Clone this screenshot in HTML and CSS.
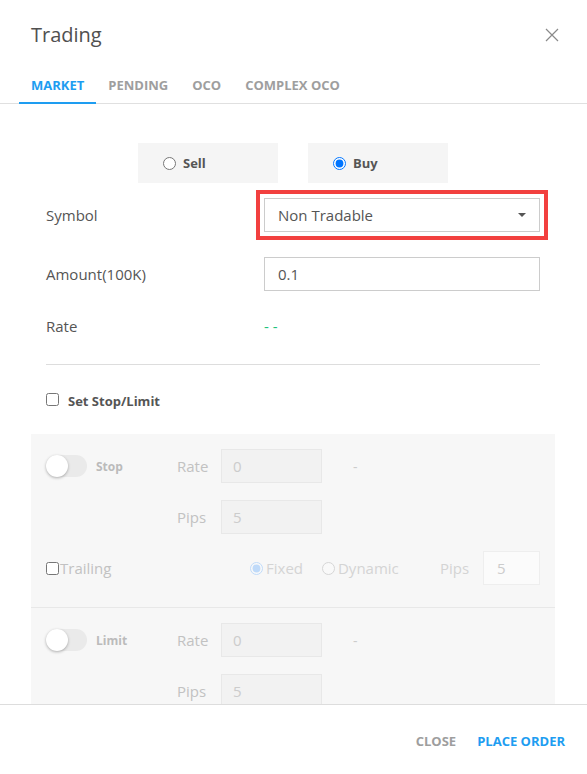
FILE: index.html
```html
<!DOCTYPE html>
<html lang="en">
<head>
    <meta charset="UTF-8">
    <meta name="viewport" content="width=device-width, initial-scale=1.0">
    <title>Trading</title>
    <link rel="stylesheet" href="styles.css">
</head>
<body>
    <div class="dialog">
        <header class="dialog-header">
            <h1 class="dialog-title">Trading</h1>
            <button class="close-btn" aria-label="Close">
                <svg width="14" height="14" viewBox="0 0 14 14">
                    <path d="M1 1L13 13M13 1L1 13" stroke="#8a8a8a" stroke-width="1.2" fill="none"/>
                </svg>
            </button>
        </header>

        <nav class="tabs">
            <span class="tab active">Market</span>
            <span class="tab">Pending</span>
            <span class="tab">OCO</span>
            <span class="tab">Complex OCO</span>
        </nav>

        <div class="dialog-body">
            <div class="side-switch">
                <label class="side-option"><input type="radio" name="side"> Sell</label>
                <label class="side-option"><input type="radio" name="side" checked> Buy</label>
            </div>

            <div class="form-row">
                <span class="form-label">Symbol</span>
                <div class="select highlight">
                    <span>Non Tradable</span>
                    <span class="caret"></span>
                </div>
            </div>

            <div class="form-row">
                <span class="form-label">Amount(100K)</span>
                <input class="text-input" type="text" value="0.1">
            </div>

            <div class="form-row rate-row">
                <span class="form-label">Rate</span>
                <span class="rate-value">- -</span>
            </div>

            <hr class="divider">

            <label class="stop-limit-check"><input type="checkbox"> Set Stop/Limit</label>

            <div class="sl-panel">
                <div class="sl-block">
                    <div class="sl-row">
                        <div class="sl-switch"><span class="toggle"></span>Stop</div>
                        <span class="sl-label">Rate</span>
                        <input class="sl-input" type="text" value="0" disabled>
                        <span class="sl-dash">-</span>
                    </div>
                    <div class="sl-row sl-indent">
                        <span class="sl-label">Pips</span>
                        <input class="sl-input" type="text" value="5" disabled>
                    </div>
                    <div class="sl-row">
                        <label class="trail-check"><input type="checkbox">Trailing</label>
                        <label class="radio-opt"><input type="radio" name="trail" checked>Fixed</label>
                        <label class="radio-opt"><input type="radio" name="trail">Dynamic</label>
                        <div class="trail-pips">
                            <span class="sl-label">Pips</span>
                            <input class="sl-input small" type="text" value="5" disabled>
                        </div>
                    </div>
                </div>
                <div class="sl-block">
                    <div class="sl-row">
                        <div class="sl-switch"><span class="toggle"></span>Limit</div>
                        <span class="sl-label">Rate</span>
                        <input class="sl-input" type="text" value="0" disabled>
                        <span class="sl-dash">-</span>
                    </div>
                    <div class="sl-row sl-indent">
                        <span class="sl-label">Pips</span>
                        <input class="sl-input" type="text" value="5" disabled>
                    </div>
                </div>
            </div>
        </div>

        <footer class="dialog-footer">
            <button class="footer-btn">Close</button>
            <button class="footer-btn primary">Place Order</button>
        </footer>
    </div>
</body>
</html>
```

FILE: styles.css
```css
:root {
    --text-color: #555555;
    --accent-color: #1e9df1;
    --muted-color: #9e9e9e;
    --line-color: #dddddd;
    --disabled-color: #c2c2c2;
}

* {
    margin: 0;
    padding: 0;
    box-sizing: border-box;
}

html, body {
    height: 100%;
    overflow: hidden;
}

body {
    font-family: "Open Sans", "Liberation Sans", sans-serif;
    color: var(--text-color);
    background: #ffffff;
}

.dialog {
    height: 100%;
    display: flex;
    flex-direction: column;
}

/* header */
.dialog-header {
    display: flex;
    justify-content: space-between;
    align-items: center;
    padding: 22px 28px 18px 31px;
}

.dialog-title {
    font-size: 20px;
    font-weight: 400;
    line-height: 26px;
    color: #505050;
}

.close-btn {
    width: 14px;
    height: 14px;
    border: none;
    background: none;
    cursor: pointer;
    display: flex;
}

/* tabs */
.tabs {
    display: flex;
    padding-left: 19px;
    border-bottom: 1px solid #e0e0e0;
}

.tab {
    padding: 10px 12px 8px;
    font-size: 13px;
    font-weight: 700;
    line-height: 18px;
    text-transform: uppercase;
    color: var(--muted-color);
    border-bottom: 2px solid transparent;
    margin-bottom: -1px;
    cursor: pointer;
}

.tab.active {
    color: var(--accent-color);
    border-bottom-color: var(--accent-color);
}

/* body */
.dialog-body {
    flex: 1;
    overflow: hidden;
    padding: 39px 47px 0 46px;
}

.side-switch {
    display: flex;
    justify-content: center;
    gap: 30px;
    margin-bottom: 15px;
}

.side-option {
    width: 140px;
    height: 40px;
    display: flex;
    align-items: center;
    gap: 7px;
    padding-left: 25px;
    background: #f5f5f5;
    font-size: 13px;
    font-weight: 700;
    cursor: pointer;
}

.side-option input {
    margin: 0;
    width: 13px;
    height: 13px;
}

.form-row {
    display: flex;
    align-items: center;
    height: 34px;
    margin-bottom: 25px;
}

.form-label {
    width: 218px;
    font-size: 15px;
}

.select,
.text-input {
    flex: 1;
    height: 34px;
    border: 1px solid #cccccc;
    padding: 0 13px;
    font-family: inherit;
    font-size: 15px;
    color: var(--text-color);
    background: #ffffff;
}

.select {
    display: flex;
    justify-content: space-between;
    align-items: center;
}

.highlight {
    outline: 4px solid #f2403f;
    outline-offset: 4px;
}

.caret {
    width: 0;
    height: 0;
    border-left: 4px solid transparent;
    border-right: 4px solid transparent;
    border-top: 4px solid var(--text-color);
}

.rate-value {
    font-size: 15px;
    color: #1ec27a;
}

.rate-row {
    height: 20px;
    margin-bottom: 0;
}

.divider {
    border: none;
    border-top: 1px solid var(--line-color);
    margin-top: 28px;
}

.stop-limit-check {
    display: flex;
    align-items: center;
    gap: 9px;
    height: 20px;
    margin-top: 26px;
    font-size: 13px;
    font-weight: 700;
}

.stop-limit-check input {
    margin: 0 0 3px;
    width: 13px;
    height: 13px;
}

/* stop / limit panel */
.sl-panel {
    margin: 23px -15px 0;
    background: #f7f7f7;
}

.sl-block {
    padding: 15px 15px 22px;
}

.sl-block + .sl-block {
    border-top: 1px solid #e8e8e8;
}

.sl-row {
    display: flex;
    align-items: center;
    height: 34px;
}

.sl-row + .sl-row {
    margin-top: 17px;
}

.sl-indent {
    padding-left: 131px;
}

.sl-switch {
    width: 131px;
    display: flex;
    align-items: center;
    gap: 9px;
    font-size: 12px;
    font-weight: 700;
    color: #bbbbbb;
}

.toggle {
    position: relative;
    width: 41px;
    height: 22px;
    border-radius: 11px;
    background: #eaeaea;
}

.toggle::before {
    content: '';
    position: absolute;
    left: 0;
    top: 0;
    width: 22px;
    height: 22px;
    border-radius: 50%;
    background: #ffffff;
    box-shadow: 0 1px 3px rgba(0,0,0,0.3);
}

.sl-label {
    width: 44px;
    font-size: 15px;
    color: var(--disabled-color);
}

.sl-input {
    width: 101px;
    height: 34px;
    border: 1px solid #e8e8e8;
    background: #f2f2f2;
    padding: 0 11px;
    font-family: inherit;
    font-size: 15px;
    color: #cccccc;
}

.sl-input.small {
    width: 57px;
    background: #fbfbfb;
    border-color: #eeeeee;
    padding: 0 13px;
}

.sl-dash {
    margin-left: 31px;
    font-size: 14px;
    color: #cccccc;
}

.trail-check {
    width: 204px;
    display: flex;
    align-items: center;
    gap: 1px;
    font-size: 15px;
    color: var(--disabled-color);
}

.trail-check input {
    margin: 0;
    width: 13px;
    height: 13px;
}

.radio-opt {
    display: flex;
    align-items: center;
    gap: 3px;
    font-size: 15px;
    color: #d4d4d4;
}

.radio-opt + .radio-opt {
    margin-left: 19px;
}

.radio-opt input {
    margin: 0;
    width: 13px;
    height: 13px;
    accent-color: #1e88ff;
    opacity: 0.25;
}

.trail-pips {
    margin-left: auto;
    display: flex;
    align-items: center;
}

.trail-pips .sl-label {
    width: 43px;
    color: #d4d4d4;
}

/* footer */
.dialog-footer {
    flex-shrink: 0;
    height: 70px;
    border-top: 1px solid var(--line-color);
    display: flex;
    justify-content: flex-end;
    align-items: center;
    gap: 21px;
    padding: 3px 22px 0 0;
}

.footer-btn {
    border: none;
    background: none;
    font-family: inherit;
    font-size: 13px;
    font-weight: 700;
    text-transform: uppercase;
    color: var(--muted-color);
    cursor: pointer;
}

.footer-btn.primary {
    color: var(--accent-color);
}
```
